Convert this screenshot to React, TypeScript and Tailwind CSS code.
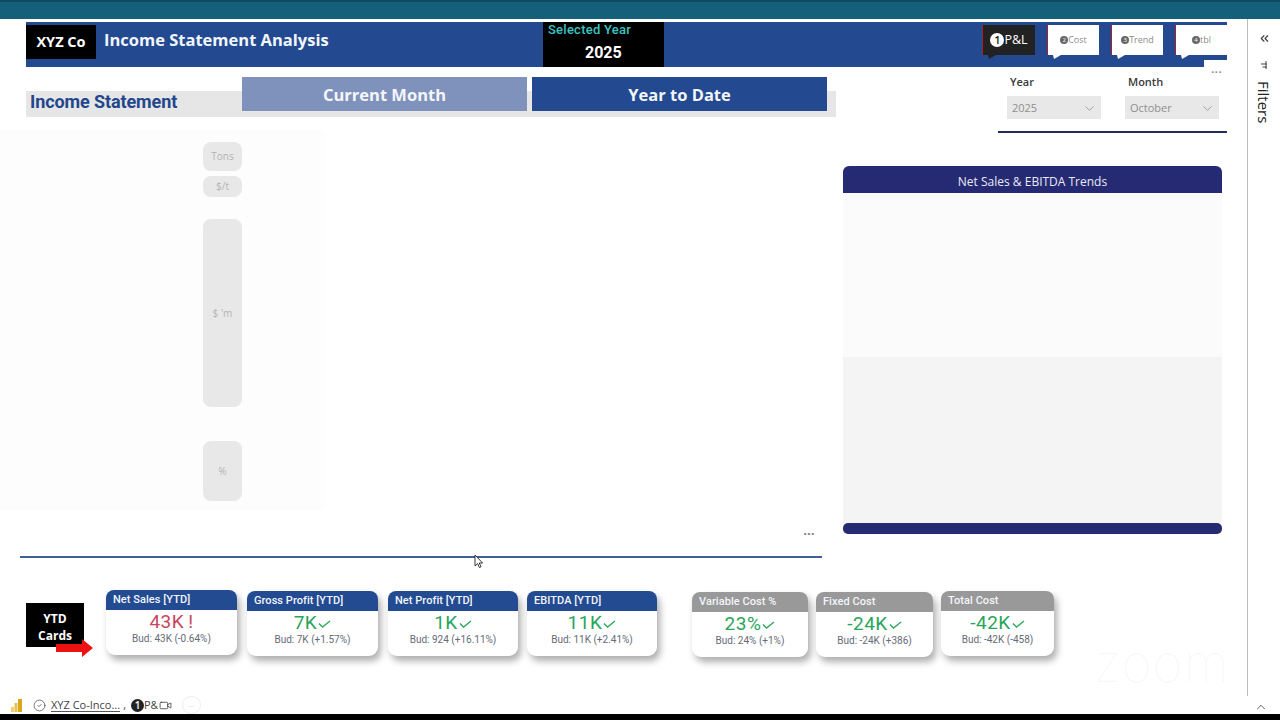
import React from "react";
import { ChevronDown, ChevronsLeft, ChevronUp, Video, CircleCheck } from "lucide-react";

const din = "font-['Roboto',sans-serif]";

function Check() {
  return (
    <svg width="13" height="10" viewBox="0 0 13 10" className="ml-[1px] mt-[3px]" fill="none" stroke="#2fa85c" strokeWidth="1.4">
      <path d="M1 4.5 L4.5 8 L12 2" />
    </svg>
  );
}

type CardProps = { title: string; value: string; bud: string; w: string; mt: string; gray?: boolean; warn?: boolean };

function Card({ title, value, bud, w, mt, gray, warn }: CardProps) {
  return (
    <div className={`${w} ${mt} h-[65px] shrink-0 rounded-t-[8px] rounded-b-[9px] bg-white shadow-[3px_5px_7px_rgba(0,0,0,0.32)]`}>
      <div className={`h-[20px] rounded-t-[8px] pl-[7px] text-[11px] leading-[20px] font-medium tracking-[0.05px] text-[#f2f5fa] ${din} ${gray ? "bg-[#999999]" : "bg-[#234b92]"}`}>
        {title}
      </div>
      <div className={`flex h-[23px] items-center justify-center text-[19px] leading-[23px] font-normal tracking-[0.5px] ${din} ${warn ? "text-[#c9475e]" : "text-[#28a55a]"}`}>
        {value}
        {warn ? <span className="ml-[4px]">!</span> : <Check />}
      </div>
      <div className={`text-center text-[10px] leading-[12px] text-[#666a78] ${din}`}>{bud}</div>
    </div>
  );
}

function Pill({ label, h, mt }: { label: string; h: string; mt: string }) {
  return (
    <div className={`${h} ${mt} flex w-[39px] items-center justify-center rounded-[8px] bg-[#e8e8e8] text-[10px] text-[#b4b4b4] font-['Open_Sans',sans-serif]`}>
      {label}
    </div>
  );
}

function NavBtn({ num, label, w, active }: { num: string; label: string; w: string; active?: boolean }) {
  return (
    <div className={`relative flex h-[30px] ${w} items-center justify-center border-l border-[#a8202c] ${active ? "bg-[#222222] text-white" : "bg-white text-[#8c8c8c]"} font-['Open_Sans',sans-serif]`}>
      {active ? (
        <span className="flex h-[14px] w-[14px] items-center justify-center rounded-full bg-white text-[11px] font-semibold text-[#222222]">{num}</span>
      ) : (
        <span className="flex h-[8px] w-[8px] items-center justify-center rounded-full bg-[#666666] text-[6px] text-white">{num}</span>
      )}
      <span className={active ? "text-[12.5px]" : "text-[9px]"}>{label}</span>
      <svg width="8" height="4" viewBox="0 0 8 4" className="absolute left-[5px] top-[30px]">
        <path d="M0 0 H8 L1 4 Z" fill={active ? "#222222" : "#ffffff"} />
      </svg>
    </div>
  );
}

function Drop({ label, value }: { label: string; value: string }) {
  return (
    <div className="w-[94px]">
      <div className="pl-[3px] text-[11px] leading-[15px] font-semibold text-[#3a3a3a] font-['Open_Sans',sans-serif]">{label}</div>
      <div className="mt-[7px] flex h-[23px] items-center justify-between bg-[#e8e8e8] pl-[5px] pr-[4px] pt-[1px] text-[11px] text-[#8f8f8f] font-['Open_Sans',sans-serif]">
        {value}
        <ChevronDown size={15} strokeWidth={1} className="text-[#777777]" />
      </div>
    </div>
  );
}

export default function App() {
  return (
    <div className="relative flex h-[720px] w-[1280px] flex-col overflow-hidden bg-white">
      <div className="h-[19px] shrink-0 border-t-2 border-[#0e4a60] bg-[#14607a]" />
      <div className="flex h-[695px] shrink-0">
        <main className="relative w-[1247px] shrink-0">
          {/* Header */}
          <header className="relative mx-[26px] mt-[3px] flex h-[45px] w-[1201px] bg-[#234a90]">
            <div className="mt-[3px] flex h-[34px] w-[70px] items-center justify-center bg-black text-[14.5px] font-bold text-white font-['Open_Sans',sans-serif]">XYZ Co</div>
            <div className="ml-[8px] mt-[6px] h-[24px] w-[439px] text-[16.5px] leading-[24px] font-bold text-[#f2f5fa] font-['Open_Sans',sans-serif]">Income Statement Analysis</div>
            <div className={`w-[121px] bg-black ${din}`}>
              <div className="pl-[5px] pt-[1px] text-[13px] leading-[14px] font-medium tracking-[0.25px] text-[#3cc4c0]">Selected Year</div>
              <div className="mt-[6px] pl-[42px] text-[16px] leading-[19px] font-bold text-white">2025</div>
            </div>
            <div className="ml-[318px] mt-[3px] flex gap-[12px]">
              <NavBtn num="1" label="P&L" w="w-[53px]" active />
              <NavBtn num="2" label="Cost" w="w-[52px]" />
              <NavBtn num="3" label="Trend" w="w-[52px]" />
              <NavBtn num="4" label="tbl" w="w-[52px]" />
            </div>
            <div className="absolute bottom-0 right-0 h-[7px] w-[23px] bg-white" />
          </header>

          <div className="flex">
            {/* Left column */}
            <div className="ml-[26px] w-[810px] shrink-0">
              <div className="relative mt-[24px] h-[26px] bg-[#e6e6e6]">
                <div className={`pl-[4px] text-[18px] leading-[22px] font-bold tracking-[-0.1px] text-[#23478c] ${din}`}>Income Statement</div>
                <div className="absolute left-[216px] top-[-14px] flex gap-[5px] text-[16.5px] font-bold text-[#f4f6fa] font-['Open_Sans',sans-serif]">
                  <div className="flex h-[34px] w-[285px] items-center justify-center bg-[#7f92bb] pt-[2px]">Current Month</div>
                  <div className="flex h-[34px] w-[295px] items-center justify-center bg-[#234a90] pt-[2px]">Year to Date</div>
                </div>
              </div>
              <div className="ml-[-26px] mt-[13px] h-[380px] w-[325px] bg-[#fdfdfd] pl-[203px]">
                <div className="h-[12px]" />
                <Pill label="Tons" h="h-[29px]" mt="mt-[0px]" />
                <Pill label="$/t" h="h-[21px]" mt="mt-[5px]" />
                <Pill label="$ 'm" h="h-[188px]" mt="mt-[22px]" />
                <Pill label="%" h="h-[60px]" mt="mt-[34px]" />
              </div>
              <div className="mt-[13px] flex h-[16px] w-[789px] justify-end text-[12px] leading-[16px] font-bold tracking-[0.5px] text-[#777777]">...</div>
              <div className="ml-[-6px] mt-[17px] h-[2px] w-[802px] bg-[#3f5f96]" />
              {/* Cards */}
              <div className="mt-[32px] flex items-start">
                <div className="mt-[13px] flex h-[44px] w-[58px] shrink-0 items-center justify-center bg-black pt-[4px] text-center text-[12px] leading-[17px] font-bold text-white font-['Open_Sans',sans-serif]">YTD<br />Cards</div>
                <svg width="38" height="18" viewBox="0 0 38 18" className="relative z-10 ml-[-28px] mt-[49px] shrink-0">
                  <path d="M0 5 H26 V0 L37 9 L26 18 V13 H0 Z" fill="#ee1111" />
                </svg>
                <div className="ml-[12px] flex shrink-0 gap-[10px]">
                  <Card title="Net Sales [YTD]" value="43K" bud="Bud: 43K (-0.64%)" w="w-[131px]" mt="mt-0" warn />
                  <Card title="Gross Profit [YTD]" value="7K" bud="Bud: 7K (+1.57%)" w="w-[131px]" mt="mt-[1px]" />
                  <Card title="Net Profit [YTD]" value="1K" bud="Bud: 924 (+16.11%)" w="w-[130px]" mt="mt-[1px]" />
                  <Card title="EBITDA [YTD]" value="11K" bud="Bud: 11K (+2.41%)" w="w-[130px] ml-[-1px]" mt="mt-[1px]" />
                </div>
                <div className="ml-[35px] flex shrink-0 gap-[8px]">
                  <Card title="Variable Cost %" value="23%" bud="Bud: 24% (+1%)" w="w-[116px]" mt="mt-[2px]" gray />
                  <Card title="Fixed Cost" value="-24K" bud="Bud: -24K (+386)" w="w-[117px]" mt="mt-[2px]" gray />
                  <Card title="Total Cost" value="-42K" bud="Bud: -42K (-458)" w="w-[113px]" mt="mt-[1px]" gray />
                </div>
              </div>
            </div>

            {/* Right column */}
            <div className="w-[391px] shrink-0">
              <div className="mt-[-1px] flex h-[6px] w-[386px] justify-end text-[11px] leading-[6px] font-bold tracking-[0.5px] text-[#8a8a8a]">...</div>
              <div className="ml-[171px] mt-[2px] flex gap-[24px]">
                <Drop label="Year" value="2025" />
                <Drop label="Month" value="October" />
              </div>
              <div className="ml-[162px] mt-[12px] h-[2px] w-[229px] bg-[#262b5e]" />
              <div className="ml-[7px] mt-[33px] w-[379px]">
                <div className="flex h-[27px] items-center justify-center rounded-t-[6px] bg-[#252a72] pt-[4px] text-[12px] font-medium text-[#e9ebf6] font-['Open_Sans',sans-serif]">Net Sales &amp; EBITDA Trends</div>
                <div className="h-[164px] bg-[#fbfbfb]" />
                <div className="h-[166px] bg-[#f4f4f4]" />
                <div className="h-[11px] rounded-[5px] bg-[#252a72]" />
              </div>
            </div>
          </div>

          {/* Cursor */}
          <svg width="10" height="15" viewBox="0 0 10 15" className="absolute left-[474px] top-[535px]">
            <path d="M1 1 V12 L3.6 9.6 L5.4 13.6 L7 12.8 L5.3 9 H8.6 Z" fill="#ffffff" stroke="#222222" strokeWidth="0.9" />
          </svg>

          {/* Zoom watermark */}
          <div className="absolute left-[1094px] top-[621px] text-[52px] leading-[48px] tracking-[1px] text-[#f8f8f8] font-['Inter',sans-serif] font-thin">zoom</div>

          {/* Video-call strip */}
          <div className="absolute left-[11px] top-[678px] flex h-[16px] items-center text-[11px] text-[#444444] font-['Open_Sans',sans-serif]">
            <svg width="11" height="13" viewBox="0 0 11 13" className="mr-[11px]">
              <rect x="0" y="8" width="3" height="5" fill="#f0d070" />
              <rect x="3.5" y="4" width="3" height="9" fill="#e8c050" />
              <rect x="7" y="0" width="4" height="13" fill="#d9a61e" />
            </svg>
            <CircleCheck size={13} strokeWidth={1.2} className="mr-[5px] text-[#333333]" />
            <span className="border-b border-[#555555] leading-[13px]">XYZ Co-Inco...</span>
            <span className="ml-[3px]">,</span>
            <span className="ml-[5px] flex h-[13px] w-[13px] items-center justify-center rounded-full bg-[#222222] text-[10px] font-semibold text-white">1</span>
            <span>P&amp;</span>
            <span className="ml-[-2px] flex h-[18px] w-[18px] items-center justify-center rounded-full bg-white">
              <Video size={13} strokeWidth={1.3} className="text-[#222222]" />
            </span>
            <span className="ml-[7px] flex h-[18px] w-[19px] items-center justify-center rounded-full border border-[#eeeeee] text-[7px] text-[#cccccc]">...</span>
          </div>
        </main>

        {/* Filters rail */}
        <aside className="flex h-[677px] w-[33px] shrink-0 flex-col items-center border-l border-[#bdbdbd]">
          <ChevronsLeft size={13} strokeWidth={2.2} className="mt-[13px] text-[#444444]" />
          <svg width="10" height="10" viewBox="0 0 10 10" className="mt-[15px]" fill="none" stroke="#444444" strokeWidth="1">
            <path d="M2 4 H8 M3.5 7 H8 M7 1 V9" />
          </svg>
          <div className="mt-[11px] text-[15px] leading-[16px] font-medium text-[#222222] [writing-mode:vertical-rl] font-['Open_Sans',sans-serif]">Filters</div>
        </aside>
      </div>
      <ChevronUp size={14} strokeWidth={1.3} className="absolute left-[1254px] top-[700px] text-[#333333]" />
      <div className="h-[6px] shrink-0 bg-black" />
    </div>
  );
}
